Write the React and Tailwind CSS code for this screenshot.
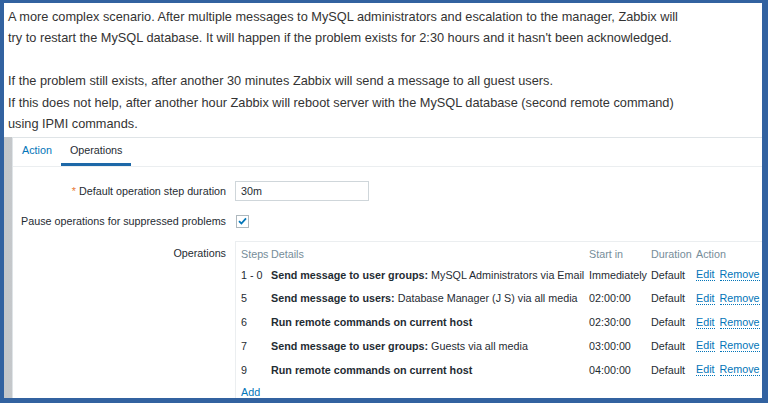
import React from "react";

const font = { fontFamily: '"Liberation Sans", Arial, sans-serif' };

const rows = [
  { step: "1 - 0", bold: "Send message to user groups:", rest: " MySQL Administrators via Email", start: "Immediately" },
  { step: "5", bold: "Send message to users:", rest: " Database Manager (J S) via all media", start: "02:00:00" },
  { step: "6", bold: "Run remote commands on current host", rest: "", start: "02:30:00" },
  { step: "7", bold: "Send message to user groups:", rest: " Guests via all media", start: "03:00:00" },
  { step: "9", bold: "Run remote commands on current host", rest: "", start: "04:00:00" },
];

function Link({ children }) {
  return (
    <span className="text-[#0275b8] border-b border-dotted border-[#0275b8] leading-[12px]">{children}</span>
  );
}

export default function App() {
  return (
    <div className="w-[768px] h-[403px] bg-[#3262a0] pt-[3px] pl-[4px] pr-[6px] pb-[5px]" style={font}>
      <div className="w-full h-full bg-white overflow-hidden flex flex-col">
        {/* intro text */}
        <div className="pl-[4px] pt-[3px] text-[12.75px] leading-[21.4px] text-[#333] h-[134px] shrink-0">
          <p>A more complex scenario. After multiple messages to MySQL administrators and escalation to the manager, Zabbix will</p>
          <p>try to restart the MySQL database. It will happen if the problem exists for 2:30 hours and it hasn't been acknowledged.</p>
          <p>&nbsp;</p>
          <p>If the problem still exists, after another 30 minutes Zabbix will send a message to all guest users.</p>
          <p>If this does not help, after another hour Zabbix will reboot server with the MySQL database (second remote command)</p>
          <p>using IPMI commands.</p>
        </div>

        {/* form area */}
        <div className="flex-1 flex bg-linear-to-r from-[#c4c7ca] to-[#eceff1] pl-[8px]">
          <div className="flex-1 bg-white border-t border-l border-[#dfe4e7] text-[10.75px] text-[#1f2c33]">
            {/* tabs */}
            <div className="flex h-[29px] border-b border-[#ebeef0]">
              <div className="px-[9px] flex items-center text-[#0275b8] pb-[3px]">Action</div>
              <div className="px-[9px] flex items-center border-b-[3px] border-[#1d68a8]">Operations</div>
            </div>

            {/* form rows */}
            <div className="pt-[14px] flex flex-col gap-[10px]">
              <div className="flex items-center h-[20px]">
                <div className="w-[213px] text-right">
                  <span className="text-[#e8793a]">*</span> Default operation step duration
                </div>
                <div className="ml-[9px] w-[134px] h-[20px] border border-[#cfd6da] flex items-center pl-[5px]">30m</div>
              </div>

              <div className="flex items-center h-[20px]">
                <div className="w-[213px] text-right">Pause operations for suppressed problems</div>
                <div className="ml-[10px] w-[13px] h-[13px] border border-[#aeb8be] flex items-center justify-center">
                  <svg width="9" height="8" viewBox="0 0 9 8">
                    <path d="M1 4.2 L3.4 6.5 L8 1.4" stroke="#0275b8" strokeWidth="1.8" fill="none" />
                  </svg>
                </div>
              </div>

              <div className="flex">
                <div className="w-[213px] text-right pt-[4px]">Operations</div>
                <div className="ml-[9px] flex-1 border-t border-l border-[#ebeef0] pl-[5px] pt-[3px]">
                  <div className="grid grid-cols-[30px_318px_62px_45px_1fr] items-center h-[18px] text-[#768d99]">
                    <div>Steps</div>
                    <div>Details</div>
                    <div>Start in</div>
                    <div>Duration</div>
                    <div>Action</div>
                  </div>
                  {rows.map((r, i) => (
                    <div key={i} className="grid grid-cols-[30px_318px_62px_45px_1fr] items-center h-[23.7px] whitespace-nowrap">
                      <div>{r.step}</div>
                      <div>
                        <span className="font-bold">{r.bold}</span>
                        {r.rest}
                      </div>
                      <div>{r.start}</div>
                      <div>Default</div>
                      <div className="flex gap-[5px]">
                        <Link>Edit</Link>
                        <Link>Remove</Link>
                      </div>
                    </div>
                  ))}
                  <div className="h-[22px] flex items-center text-[#0275b8]">Add</div>
                </div>
              </div>
            </div>
          </div>
        </div>
      </div>
    </div>
  );
}
